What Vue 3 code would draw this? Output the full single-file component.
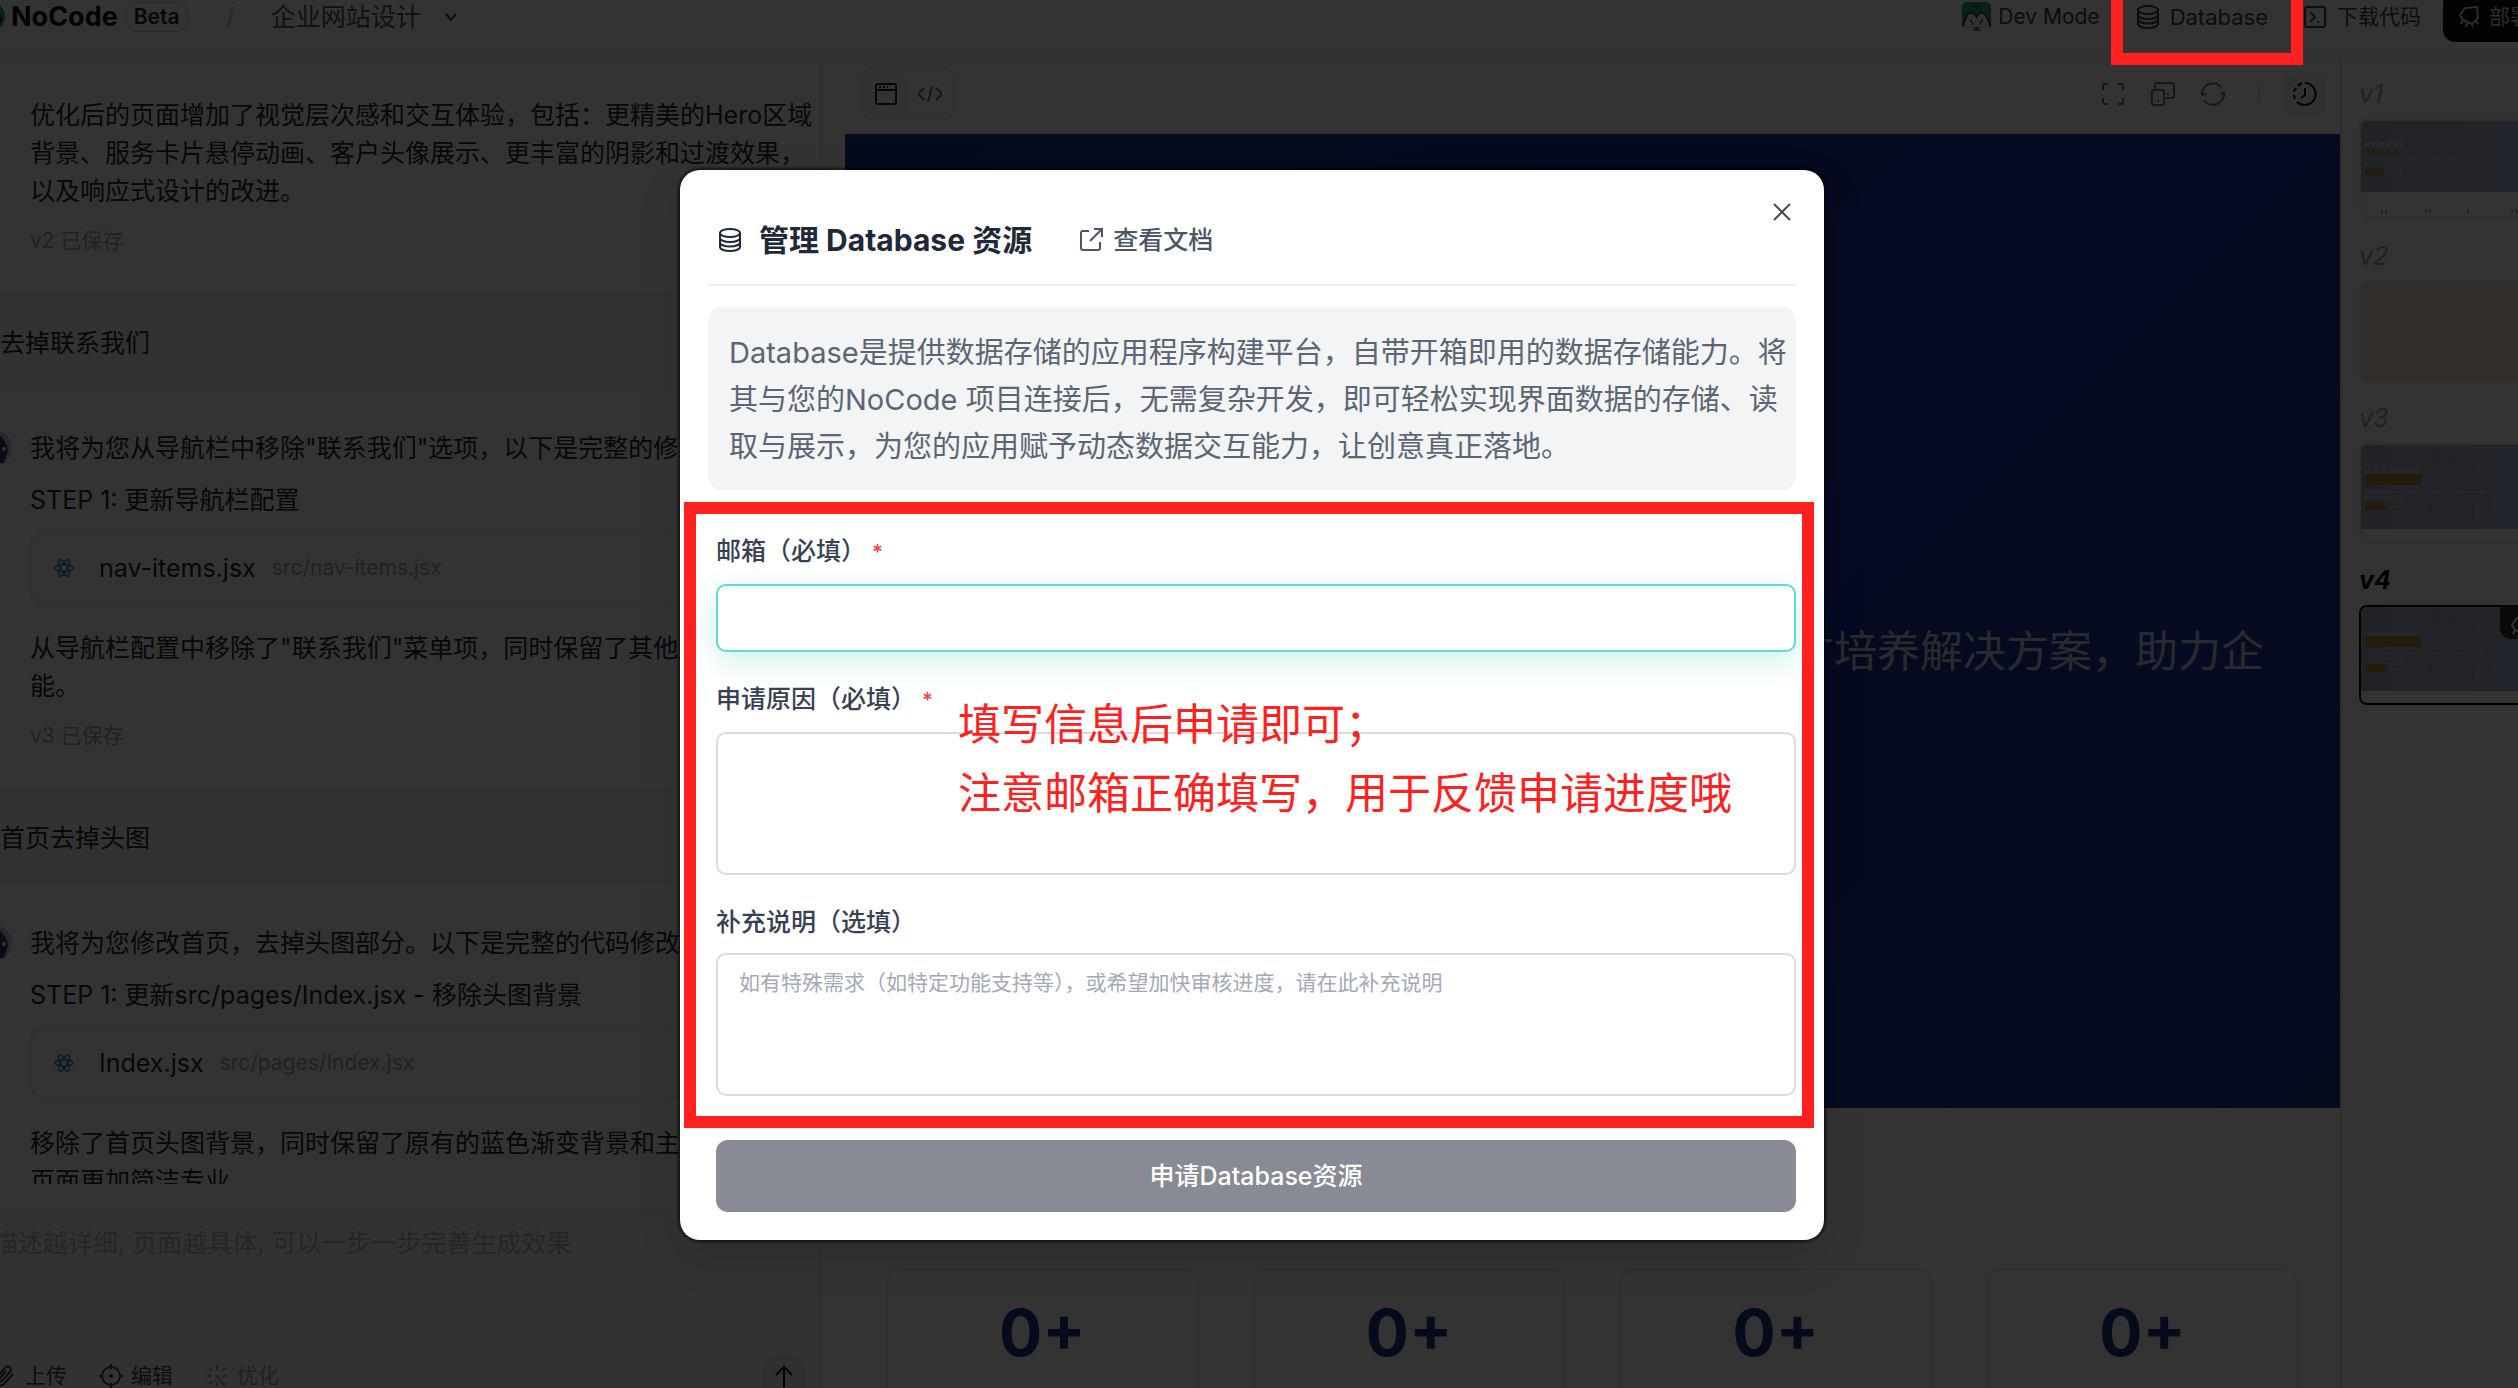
<template>
  <div class="page">
    <div class="shell">
      <header class="topbar">
        <svg class="logo" viewBox="0 0 30 30">
          <circle cx="15" cy="15" r="15" fill="#1fae7c" />
          <circle cx="18" cy="17" r="9" fill="#111827" />
        </svg>
        <strong class="brand">NoCode</strong>
        <span class="beta">Beta</span>
        <span class="slash">/</span>
        <button class="project">
          企业网站设计
          <svg class="chevron" viewBox="0 0 16 16"><path d="M3 5l5 6 5-6" /></svg>
        </button>
        <nav class="actions">
          <button class="action dev">
            <svg class="dev-icon" viewBox="0 0 28 28">
              <defs>
                <linearGradient id="devFill" x1="0" y1="0" x2="0" y2="1">
                  <stop offset="0" stop-color="#18a999" />
                  <stop offset="1" stop-color="#3f9a1f" />
                </linearGradient>
              </defs>
              <rect width="28" height="25" rx="4" fill="url(#devFill)" />
              <path d="M3 28l-1-7 4-9 4-1 4 4 4-4 4 1 4 9-1 7h-5l-1-4-3 2h-4l-3-2-1 4z" fill="#f3f4f6" />
              <path d="M0 24l2-4 4-9 4-1 3 3 1 2 1-2 3-3 4 1 4 9 2 4M8 17l3 5M20 17l-3 5M11 3l1 3M14 3v4M17 3l-1 3" fill="none" stroke="#111" stroke-width="1" />
              <path d="M10 28l2-4h4l2 4z" fill="#3f9a1f" />
            </svg>
            Dev Mode
          </button>
          <button class="action database">
            <svg class="icon" viewBox="0 0 24 24">
              <ellipse cx="12" cy="5" rx="10" ry="4" />
              <path d="M2 5v14c0 2 4 4 10 4s10-2 10-4V5M2 10c0 2 4 4 10 4s10-2 10-4M2 14.500c0 2 4 4 10 4s10-2 10-4" />
            </svg>
            Database
          </button>
          <button class="action">
            <svg class="icon" viewBox="0 0 24 24">
              <rect x="2" y="2" width="20" height="20" rx="2" />
              <path d="M7 7l5 5-5 5M14 17h2" />
            </svg>
            下载代码
          </button>
          <button class="deploy">
            <svg class="icon" viewBox="0 0 24 24"><path d="M8 3l12-1 1 11-6 6-9-4-3-5zM6 15l-2 4M10 18l-1 4M15 19l1 3M19 16l2 3" /></svg>
            部署
          </button>
        </nav>
      </header>

      <main class="workspace">
        <section class="chat">
          <div class="log">
            <article class="message">
              <p>优化后的页面增加了视觉层次感和交互体验，包括：更精美的Hero区域背景、服务卡片悬停动画、客户头像展示、更丰富的阴影和过渡效果，以及响应式设计的改进。</p>
              <p class="saved">v2 已保存</p>
            </article>
            <template v-for="item in messages" :key="item.ask">
              <p class="ask">{{ item.ask }}</p>
              <article class="message">
                <svg class="avatar" viewBox="0 0 36 36">
                  <circle cx="18" cy="18" r="18" fill="#c9cde0" />
                  <path d="M18 4c7 0 10 5 13 12l1 5-4 12H8L4 20z" fill="#3b4270" />
                  <circle cx="28" cy="19" r="2" fill="#fff" />
                  <circle cx="16" cy="19" r="2" fill="#fff" />
                </svg>
                <p>{{ item.intro }}</p>
                <p class="step">{{ item.step }}</p>
                <div class="file">
                  <svg class="atom" viewBox="0 0 24 24">
                    <ellipse cx="12" cy="12" rx="11" ry="4" />
                    <ellipse cx="12" cy="12" rx="11" ry="4" transform="rotate(60 12 12)" />
                    <ellipse cx="12" cy="12" rx="11" ry="4" transform="rotate(120 12 12)" />
                  </svg>
                  <span class="file-name">{{ item.file }}</span>
                  <span class="file-path">{{ item.path }}</span>
                </div>
                <p>{{ item.result }}</p>
                <p v-if="item.saved" class="saved">{{ item.saved }}</p>
              </article>
            </template>
          </div>
          <div class="composer">
            <textarea class="prompt" aria-label="描述" placeholder="描述越详细, 页面越具体, 可以一步一步完善生成效果"></textarea>
            <div class="tools">
              <button class="tool">
                <svg class="icon" viewBox="0 0 24 24"><path d="M20 10l-9 10c-2 2-5 2-7 0s-2-5 0-7l9-10c2-2 7 1 4 5l-8 9c-2 2-4-1-3-2l7-8" /></svg>
                上传
              </button>
              <button class="tool">
                <svg class="icon" viewBox="0 0 24 24"><circle cx="12" cy="12" r="9" /><circle cx="12" cy="12" r="1" /><path d="M12 0v5M12 19v5M0 12h4M20 12h4" /></svg>
                编辑
              </button>
              <button class="tool muted" disabled>
                <svg class="icon" viewBox="0 0 24 24"><path d="M12 1v5M4 4l3 3M20 4l-3 3M1 12h5M4 20l3-3M11 11l9 11M18 12h4M12 18v4" /></svg>
                优化
              </button>
              <button class="send" aria-label="发送">
                <svg class="icon" viewBox="0 0 24 24"><path d="M12 23V3M4 11l8-8 8 8" /></svg>
              </button>
            </div>
          </div>
        </section>

        <section class="preview">
          <div class="preview-bar">
            <div class="switch">
              <button class="tab selected" aria-label="预览">
                <svg class="icon" viewBox="0 0 24 24"><rect x="2" y="2" width="20" height="20" rx="2" /><path d="M2 8h20M5 5h2M9 5h2M13 5h1" /></svg>
              </button>
              <button class="tab grey" aria-label="代码">
                <svg class="icon" viewBox="0 0 24 24"><path d="M6 6l-6 6 6 6M18 6l6 6-6 6M14 4l-4 16" /></svg>
              </button>
            </div>
            <div class="view-tools">
              <button class="tab grey" aria-label="全屏">
                <svg class="icon" viewBox="0 0 24 24"><path d="M2 8V4q0-2 2-2h3M17 2h3q2 0 2 2v4M22 16v4q0 2-2 2h-3M7 22H4q-2 0-2-2v-4" /></svg>
              </button>
              <button class="tab grey" aria-label="设备">
                <svg class="icon" viewBox="0 0 24 24"><path d="M4 7V3q0-2 2-2h15q2 0 2 2v11q0 2-2 2h-6M16 12h2" /><rect x="1" y="8" width="12" height="15" rx="2" /><path d="M6 19h2" /></svg>
              </button>
              <button class="tab grey" aria-label="刷新">
                <svg class="icon" viewBox="0 0 24 24"><path d="M1 12a11 11 0 0 1 20-6M23 12a11 11 0 0 1-20 6M0 10l1 3 4-1M24 14l-1-3-4 1" /></svg>
              </button>
              <i class="divider"></i>
              <button class="tab clock" aria-label="历史版本">
                <svg class="icon" viewBox="0 0 24 24"><path d="M12 1a11 11 0 1 1-8 19M2 17a11 11 0 0 1-1-4M1 10a11 11 0 0 1 2-4M5 4a11 11 0 0 1 4-3M12 6v7l-4 3" /></svg>
              </button>
            </div>
          </div>
          <div class="site">
            <div class="hero"><p class="hero-text">人才培养解决方案，助力企</p></div>
            <div class="stats">
              <div v-for="n in 4" :key="n" class="stat">0+</div>
            </div>
          </div>
        </section>

        <aside class="versions">
          <div v-for="v in versions" :key="v.name" :class="['version', v.kind, { active: v.active }]">
            <span class="version-name">{{ v.name }}</span>
            <button class="thumb" :aria-label="v.name">
              <svg v-if="v.kind !== 'plain'" class="thumb-art" viewBox="0 0 180 97">
                <defs>
                  <linearGradient :id="'sky' + v.name">
                    <stop offset="0" stop-color="#a6abb8" />
                    <stop offset="1" stop-color="#abb6dc" />
                  </linearGradient>
                </defs>
                <rect width="180" :height="v.kind === 'early' ? 71 : 84" :fill="`url(#sky${v.name})`" />
                <template v-if="v.kind === 'early'">
                  <path d="M4 23h38" stroke="#d0d3dc" stroke-width="4" stroke-dasharray="5 2" />
                  <path d="M4 31h36" stroke="#a89c5c" stroke-width="4" stroke-dasharray="5 2" />
                  <path d="M4 38h100M4 43h10" stroke="#c6cad6" stroke-dasharray="3 2" />
                  <rect x="4" y="47" width="19" height="7" fill="#ac9238" />
                  <rect x="25" y="47" width="15" height="7" fill="none" stroke="#c3c8d4" />
                  <path d="M20 90h6M64 90h6M106 90h4M150 90h6" stroke="#aaa" stroke-width="4" stroke-dasharray="2 2" />
                </template>
                <template v-else>
                  <path d="M4 27h54" stroke="#c4c8d2" stroke-width="3" stroke-dasharray="6 2" />
                  <rect x="4" y="29" width="56" height="11" fill="#a88d3c" />
                  <path d="M4 47h118M4 52h38" stroke="#c2c6d2" stroke-width="2" stroke-dasharray="4 2" />
                  <rect x="4" y="57" width="22" height="8" fill="#a88d3c" />
                  <path d="M30 62h14" stroke="#c2c6d2" stroke-width="2" stroke-dasharray="4 1" />
                  <path d="M60 2l52 18 4 16M76 6v14M88 9v14M100 14v16M70 56v14M112 60v16M128 52v16" fill="none" stroke="#a0a7ba" />
                </template>
              </svg>
              <span v-if="v.active" class="badge">
                <svg class="icon" viewBox="0 0 24 24"><path d="M8 3l12-1 1 11-6 6-9-4-3-5zM6 15l-2 4M10 18l-1 4" /></svg>
              </span>
            </button>
          </div>
        </aside>
      </main>
    </div>

    <div class="overlay">
      <div class="dialog" role="dialog" aria-labelledby="dialog-title">
        <button class="close" aria-label="关闭">
          <svg viewBox="0 0 18 18"><path d="M1 1l16 16M17 1L1 17" /></svg>
        </button>
        <div class="dialog-head">
          <svg class="icon" viewBox="0 0 24 24">
            <ellipse cx="12" cy="5" rx="10" ry="4" />
            <path d="M2 5v14c0 2 4 4 10 4s10-2 10-4V5M2 10c0 2 4 4 10 4s10-2 10-4M2 14.500c0 2 4 4 10 4s10-2 10-4" />
          </svg>
          <h2 id="dialog-title">管理 Database 资源</h2>
          <a class="doc" href="#">
            <svg class="icon" viewBox="0 0 24 24"><path d="M10 3H4q-2 0-2 2v15q0 2 2 2h15q2 0 2-2v-6M15 1h8v8M23 1L11 13" /></svg>
            查看文档
          </a>
        </div>
        <p class="info">Database是提供数据存储的应用程序构建平台，自带开箱即用的数据存储能力。将其与您的NoCode 项目连接后，无需复杂开发，即可轻松实现界面数据的存储、读取与展示，为您的应用赋予动态数据交互能力，让创意真正落地。</p>
        <form class="form" @submit.prevent>
          <label for="email">邮箱（必填）<span class="star">*</span></label>
          <input id="email" v-model="email" type="text" class="field focused" />
          <label for="reason">申请原因（必填）<span class="star">*</span></label>
          <textarea id="reason" v-model="reason" class="field area"></textarea>
          <label for="extra">补充说明（选填）</label>
          <textarea id="extra" v-model="extra" class="field area" placeholder="如有特殊需求（如特定功能支持等），或希望加快审核进度，请在此补充说明"></textarea>
          <div class="mark-form"></div>
          <p class="note">填写信息后申请即可；<br />注意邮箱正确填写，用于反馈申请进度哦</p>
          <button class="submit" type="submit">申请Database资源</button>
        </form>
      </div>
    </div>
    <div class="mark-nav"></div>
  </div>
</template>

<script setup>
import { ref } from 'vue';

const email = ref('');
const reason = ref('');
const extra = ref('');

const messages = [
  {
    ask: '去掉联系我们',
    intro: '我将为您从导航栏中移除"联系我们"选项，以下是完整的修改：',
    step: 'STEP 1: 更新导航栏配置',
    file: 'nav-items.jsx',
    path: 'src/nav-items.jsx',
    result: '从导航栏配置中移除了"联系我们"菜单项，同时保留了其他所有导航功能。',
    saved: 'v3 已保存'
  },
  {
    ask: '首页去掉头图',
    intro: '我将为您修改首页，去掉头图部分。以下是完整的代码修改：',
    step: 'STEP 1: 更新src/pages/Index.jsx - 移除头图背景',
    file: 'Index.jsx',
    path: 'src/pages/Index.jsx',
    result: '移除了首页头图背景，同时保留了原有的蓝色渐变背景和主要内容，使页面更加简洁专业',
    saved: ''
  }
];

const versions = [
  { name: 'v1', kind: 'early', active: false },
  { name: 'v2', kind: 'plain', active: false },
  { name: 'v3', kind: 'photo', active: false },
  { name: 'v4', kind: 'photo', active: true }
];
</script>

<style>
body {
  margin: 0;
  background: #fff;
}
</style>

<style scoped>
* {
  box-sizing: border-box;
}

.page {
  position: relative;
  height: 100vh;
  overflow: hidden;
  font-family: Inter, "Noto Sans CJK SC", sans-serif;
  font-size: 25px;
  line-height: 38px;
  color: #1f2937;
}

p,
h2 {
  margin: 0;
}

button,
input,
textarea {
  font: inherit;
  color: inherit;
  border: none;
  background: none;
  padding: 0;
}

.icon {
  width: 24px;
  height: 24px;
  flex: none;
  fill: none;
  stroke: currentColor;
  stroke-width: 2;
}

/* 页面主体，左侧有一部分在窗口外 */
.shell {
  display: flex;
  flex-direction: column;
  height: 100%;
  margin-left: -24px;
}

.topbar {
  display: flex;
  align-items: center;
  height: 57px;
  padding-bottom: 22px;
  border-bottom: 2px solid #e5e7eb;
  flex: none;
}

.logo {
  width: 29px;
  height: 29px;
}

.brand {
  margin-left: 6px;
  font-size: 27px;
  font-weight: 700;
  color: #111;
}

.beta {
  margin-left: 8px;
  padding: 0 7px;
  border: 1px solid #d9dce1;
  border-radius: 10px;
  font-size: 21px;
  line-height: 28px;
  font-weight: 600;
}

.slash {
  margin-left: 38px;
  color: #c5c8ce;
}

.project {
  display: flex;
  align-items: center;
  gap: 22px;
  margin-left: 36px;
  color: #4b5563;
}

.chevron {
  width: 16px;
  height: 16px;
  fill: none;
  stroke: #374151;
  stroke-width: 2;
}

.actions {
  display: flex;
  align-items: center;
  margin-left: auto;
}

.action {
  display: flex;
  align-items: center;
  gap: 10px;
  margin-right: 16px;
  font-size: 21px;
  color: #374151;
}

.dev {
  gap: 7px;
  margin-right: 36px;
}

.dev-icon {
  width: 29px;
  height: 29px;
}

.database {
  margin-right: 35px;
  font-size: 22px;
}

.deploy {
  display: flex;
  align-items: center;
  gap: 8px;
  height: 50px;
  margin: 0 -27px 0 6px;
  padding: 0 14px;
  border-radius: 12px;
  background: #0d1117;
  color: #d1d5db;
  font-size: 21px;
}

.workspace {
  flex: 1;
  display: flex;
  min-height: 0;
}

/* 左侧对话 */
.chat {
  display: flex;
  flex-direction: column;
  flex: 0 0 846px;
  border-right: 2px solid #e9ebee;
}

.log {
  flex: 1;
  min-height: 0;
  margin-bottom: 25px;
  overflow: hidden;
}

.message {
  position: relative;
  padding: 39px 6px 35px 54px;
}

.saved {
  margin-top: 15px;
  font-size: 21px;
  line-height: 32px;
  color: #9ca3af;
}

.ask {
  padding: 32px 0 28px 24px;
  background: #f7f7f8;
}

.avatar {
  position: absolute;
  left: 0;
  top: 40px;
  width: 36px;
  height: 36px;
}

.step {
  margin-top: 14px;
}

.file {
  display: flex;
  align-items: center;
  height: 70px;
  margin: 14px 18px 26px 0;
  padding-left: 22px;
  border: 2px solid #eceef1;
  border-radius: 12px;
}

.atom {
  width: 20px;
  height: 20px;
  fill: none;
  stroke: #3c8fb0;
  stroke-width: 2;
}

.file-name {
  margin-left: 25px;
}

.file-path {
  margin-left: 16px;
  font-size: 21px;
  color: #9ca3af;
}

.composer {
  display: flex;
  flex-direction: column;
  height: 179px;
  padding-left: 17px;
  border-top: 2px solid #eceef1;
  background: #fafafb;
  overflow: hidden;
}

.prompt {
  height: 140px;
  flex: none;
  padding: 13px 0 0;
  resize: none;
}

.prompt::placeholder {
  color: #b4b8c0;
}

.tools {
  display: flex;
  align-items: center;
  gap: 32px;
  height: 50px;
  flex: none;
  padding-right: 15px;
}

.tool {
  display: flex;
  align-items: center;
  gap: 8px;
  font-size: 21px;
  color: #374151;
}

.muted {
  color: #9ca3af;
}

.send {
  display: flex;
  align-items: center;
  justify-content: center;
  width: 42px;
  height: 42px;
  margin-left: auto;
  border-radius: 10px;
  background: #eff0f2;
  color: #000;
}

/* 预览区 */
.preview {
  flex: 1;
  min-width: 0;
  display: flex;
  flex-direction: column;
}

.preview-bar {
  display: flex;
  align-items: center;
  justify-content: space-between;
  height: 77px;
  padding: 0 14px 3px 38px;
  flex: none;
}

.switch {
  display: flex;
  align-items: center;
  height: 52px;
  padding: 0 2px;
  border: 2px solid #eceef1;
  border-radius: 12px;
}

.tab {
  display: flex;
  align-items: center;
  justify-content: center;
  width: 42px;
  height: 42px;
}

.switch .tab {
  width: 44px;
}

.selected {
  border-radius: 8px;
  background: #f7f8f9;
}

.grey {
  color: #6b7280;
}

.view-tools {
  display: flex;
  align-items: center;
  gap: 8px;
}

.divider {
  width: 2px;
  height: 18px;
  margin: 0 16px;
  background: #e5e7eb;
}

.clock {
  border-radius: 8px;
  background: #f5f6f7;
  color: #000;
}

.site {
  flex: 1;
  display: flex;
  flex-direction: column;
  margin-left: 23px;
}

.hero {
  display: flex;
  align-items: center;
  justify-content: flex-end;
  height: 974px;
  padding: 60px 76px 0 0;
  background: linear-gradient(135deg, #1e3a8a 0%, #1e32ac 50%, #1a3c96 100%);
}

.hero-text {
  font-size: 43px;
  line-height: 69px;
  color: #dbe0e8;
  opacity: 0.9;
}

.stats {
  display: grid;
  grid-template-columns: repeat(4, 1fr);
  gap: 54px;
  padding: 160px 41px 0;
}

.stat {
  height: 160px;
  border: 2px solid #f3f4f6;
  border-radius: 16px;
  font-size: 64px;
  line-height: 126px;
  font-weight: 700;
  text-align: center;
  color: #1e3a8a;
}

/* 历史版本 */
.versions {
  flex: 0 0 178px;
  padding: 20px 0 0 17px;
  border-left: 2px solid #e5e7eb;
  overflow: hidden;
}

.version {
  margin-bottom: 20px;
  color: #9ca3af;
}

.version-name {
  display: block;
  font-size: 25px;
  line-height: 34px;
  font-style: italic;
}

.thumb {
  position: relative;
  display: block;
  width: 184px;
  height: 100px;
  margin-top: 8px;
  border: 2px solid #e5e7eb;
  border-radius: 8px;
  overflow: hidden;
}

.thumb-art {
  display: block;
  width: 180px;
  height: 97px;
}

.plain .thumb {
  background: #fde4d3;
}

.active {
  color: #000;
}

.active .version-name {
  font-weight: 700;
}

.active .thumb {
  border-color: #000;
}

.badge {
  position: absolute;
  top: 0;
  right: 0;
  width: 41px;
  height: 32px;
  padding: 4px 8px;
  border-radius: 0 0 0 10px;
  background: #333;
  color: #fff;
}

/* 弹窗 */
.overlay {
  position: absolute;
  inset: 0;
  display: flex;
  align-items: center;
  justify-content: center;
  padding: 22px 14px 0 0;
  background: rgba(0, 0, 0, 0.8);
}

.dialog {
  position: relative;
  width: 1144px;
  padding: 42px 28px 28px;
  border-radius: 20px;
  background: #fff;
  box-shadow: 0 0 3px 2px rgba(0, 0, 0, 0.6), 0 16px 48px rgba(0, 0, 0, 0.1);
}

.close {
  position: absolute;
  top: 30px;
  right: 30px;
  width: 24px;
  height: 24px;
  padding: 3px;
}

.close svg {
  display: block;
  fill: none;
  stroke: #4b4b4b;
  stroke-width: 2;
}

.dialog-head {
  display: flex;
  align-items: center;
  height: 74px;
  padding: 0 10px 16px;
  border-bottom: 2px solid #eceef1;
  color: #1f2937;
}

.dialog-head h2 {
  margin-left: 17px;
  font-size: 30px;
  font-weight: 700;
}

.doc {
  display: flex;
  align-items: center;
  gap: 10px;
  margin-left: 47px;
  color: #4b5563;
  text-decoration: none;
  font-weight: 500;
}

.info {
  margin-top: 21px;
  padding: 22px 8px 20px 21px;
  border-radius: 14px;
  background: #f3f4f6;
  font-size: 29px;
  line-height: 47px;
  color: #5b6573;
}

.form {
  position: relative;
  display: flex;
  flex-direction: column;
  padding: 42px 0 0 8px;
}

.form label {
  margin-bottom: 12px;
  font-weight: 500;
  color: #374151;
}

.star {
  margin-left: 6px;
  font-size: 21px;
  color: #ef4444;
}

.field {
  width: 100%;
  height: 68px;
  margin-bottom: 28px;
  padding: 9px 21px;
  border: 2px solid #d9dbe3;
  border-radius: 10px;
  background: #fff;
}

.area {
  height: 143px;
  resize: none;
  font-size: 21px;
}

.area::placeholder {
  color: #a3a9b5;
}

.focused {
  border-color: #5fdccd;
  box-shadow: 0 8px 28px rgba(40, 200, 175, 0.25);
}

.submit {
  height: 72px;
  margin-top: 16px;
  border-radius: 12px;
  background: #888b93;
  color: #fff;
  font-weight: 500;
}

/* 红色标注 */
.mark-form {
  position: absolute;
  top: 12px;
  left: -24px;
  right: -18px;
  height: 626px;
  border: 12px solid #ff2020;
  pointer-events: none;
}

.note {
  position: absolute;
  top: 200px;
  left: 250px;
  font-size: 43px;
  line-height: 69px;
  color: #ff2020;
  pointer-events: none;
}

.mark-nav {
  position: absolute;
  top: -20px;
  right: 215px;
  width: 192px;
  height: 85px;
  border: 12px solid #ff2020;
  pointer-events: none;
}
</style>
